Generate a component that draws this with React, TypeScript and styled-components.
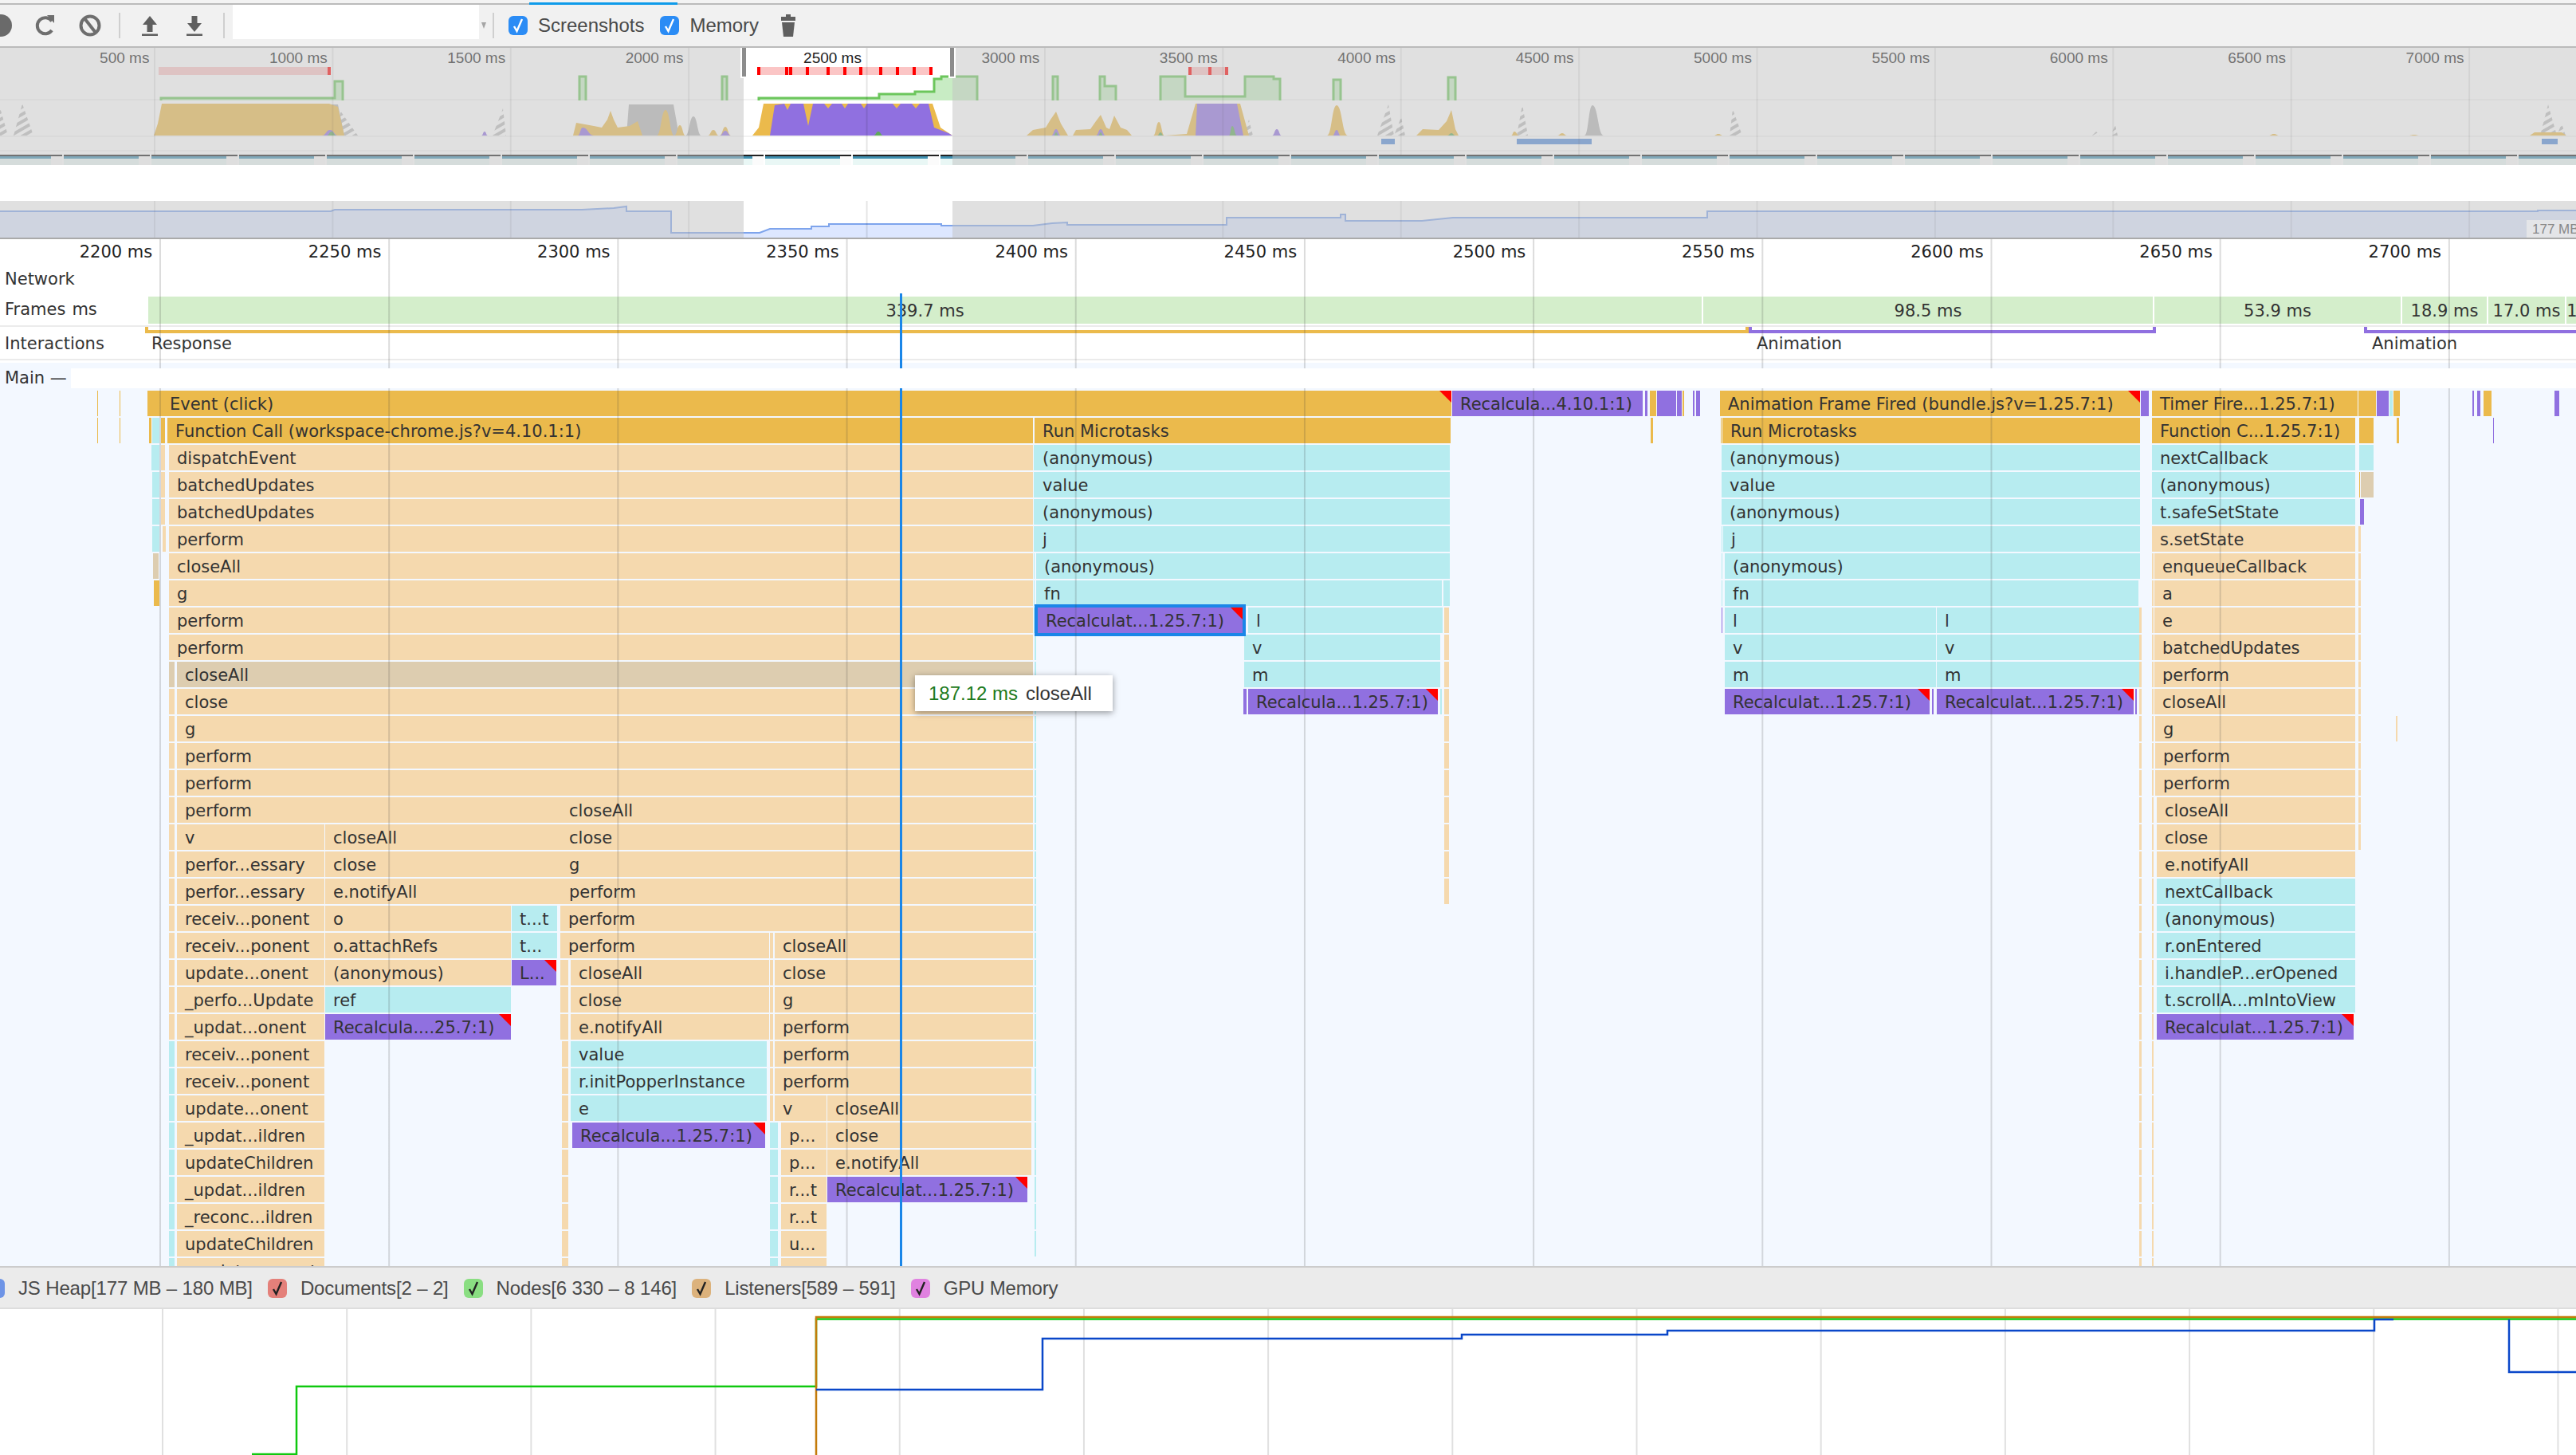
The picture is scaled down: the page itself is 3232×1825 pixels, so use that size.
import React from 'react';
import styled, { createGlobalStyle } from 'styled-components';

type Kind = 'event' | 'js' | 'fn' | 'paint' | 'hl';
type Seg = [number, number, Kind, string?, boolean?];

const barColors: Record<Kind, string> = {
  event: '#ebba4c',
  js: '#f5d9ae',
  fn: '#b7ecf0',
  paint: '#9070e0',
  hl: '#ddcdb0',
};

const UI_FONT = '"Liberation Sans", Arial, sans-serif';
const CHART_FONT = '"DejaVu Sans", Verdana, sans-serif';
const BLUE = '#1a86e8';

const GlobalStyle = createGlobalStyle`
  html, body {
    margin: 0;
    padding: 0;
    background: #fff;
    overflow: hidden;
  }
`;

const Page = styled.div`
  width: 3232px;
  height: 1825px;
  display: flex;
  flex-direction: column;
  overflow: hidden;
  font-family: ${UI_FONT};
  color: #333;
`;

const TabStrip = styled.div`
  position: relative;
  height: 4px;
  flex: none;
  background: #f3f3f3;
  border-bottom: 2px solid #bbb;
`;

const ActiveTab = styled.div`
  position: absolute;
  left: 664px;
  top: 3px;
  width: 186px;
  height: 3px;
  background: #0f9bea;
`;

const Toolbar = styled.div`
  height: 52px;
  flex: none;
  display: flex;
  align-items: center;
  background: #f1f1f1;
  border-bottom: 2px solid #bbb;
`;

const ToolButton = styled.div<{ $first?: boolean }>`
  width: 56px;
  height: 30px;
  flex: none;
  display: flex;
  align-items: center;
  justify-content: center;
  margin-left: ${(p) => (p.$first ? '-27px' : '0')};
`;

const ToolSep = styled.div`
  width: 2px;
  height: 32px;
  flex: none;
  margin: 0 9px 0 8px;
  background: #cfcfcf;
`;

const FilterBox = styled.div`
  width: 309px;
  height: 43px;
  flex: none;
  align-self: flex-start;
  margin-left: 1px;
  background: #fff;
`;

const DropArrow = styled.div`
  width: 0;
  height: 0;
  flex: none;
  margin-left: 3px;
  border-left: 3px solid transparent;
  border-right: 3px solid transparent;
  border-top: 8px solid #a5a5a5;
`;

const CheckRow = styled.div`
  display: flex;
  align-items: center;
  gap: 20px;
  margin-left: 9px;
`;

const CheckGroup = styled.label`
  display: flex;
  align-items: center;
  gap: 13px;
  font-size: 24px;
  color: #4a4a4a;
  white-space: nowrap;
`;

const CheckBox = styled.span<{ $color: string }>`
  width: 24px;
  height: 24px;
  flex: none;
  border-radius: 6px;
  display: flex;
  align-items: center;
  justify-content: center;
  background: ${(p) => p.$color};
`;

const TrashButton = styled.div`
  margin-left: 27px;
  display: flex;
`;

const Overview = styled.div`
  height: 238px;
  flex: none;
  display: flex;
  flex-direction: column;
  background: #fff;
  border-bottom: 2px solid #aaa;
`;

const OverviewTop = styled.div`
  position: relative;
  height: 147px;
  flex: none;
  display: flex;
  flex-direction: column;
  overflow: hidden;
`;

const OverviewGap = styled.div`
  height: 45px;
  flex: none;
`;

const OverviewMemory = styled.div`
  position: relative;
  height: 46px;
  flex: none;
  overflow: hidden;
`;

const OverviewTicks = styled.div`
  position: relative;
  height: 26px;
  flex: none;
  display: flex;
  margin-left: -30px;
`;

const OverviewTick = styled.div`
  flex: 0 0 223.4px;
  box-sizing: border-box;
  padding-right: 6px;
  text-align: right;
  font-size: 19px;
  line-height: 26px;
  color: #222;
  white-space: nowrap;
`;

const ChartSvg = styled.svg`
  position: absolute;
  left: 0;
  top: 0;
  display: block;
`;

const OverviewGrid = styled.div`
  position: absolute;
  inset: 0;
  background-image: linear-gradient(90deg, rgba(0, 0, 0, 0.1) 0 2px, transparent 2px);
  background-size: 223.4px 100%;
  background-position: 193px 0;
`;

const Filmstrip = styled.div`
  position: relative;
  margin-top: auto;
  height: 13px;
  flex: none;
  display: flex;
  gap: 2px;
  margin-left: -30px;
`;

const FilmFrame = styled.div`
  position: relative;
  flex: 0 0 108px;
  background: linear-gradient(180deg, #222 0 2px, #3f8fb0 2px 5px, #e9f7f5 5px);
  &::after {
    content: '';
    position: absolute;
    right: 0;
    top: 2px;
    bottom: 0;
    width: 14px;
    background: #fbfbfb;
  }
`;

const Dim = styled.div<{ $side: 'left' | 'right' }>`
  position: absolute;
  top: 0;
  bottom: 0;
  ${(p) => (p.$side === 'left' ? 'left: 0; width: 933px;' : 'left: 1195px; right: 0;')}
  background: rgba(193, 193, 193, 0.5);
`;

const Handle = styled.div<{ $x: number }>`
  position: absolute;
  top: 0;
  left: ${(p) => p.$x}px;
  width: 5px;
  height: 36px;
  background: #8c8c8c;
  border: 2px solid #fff;
  border-top: 0;
`;

const MemoryBadge = styled.div`
  position: absolute;
  right: 0;
  bottom: 0;
  width: 62px;
  height: 22px;
  box-sizing: border-box;
  padding-left: 7px;
  font-size: 17px;
  line-height: 24px;
  color: #888;
  white-space: nowrap;
  overflow: hidden;
  background: rgba(235, 235, 235, 0.75);
`;

const Timeline = styled.div`
  position: relative;
  height: 1288px;
  flex: none;
  display: flex;
  flex-direction: column;
  overflow: hidden;
  font-family: ${CHART_FONT};
  font-size: 21px;
  color: #333;
`;

const TimeGrid = styled.div`
  position: absolute;
  inset: 0;
  z-index: 1;
  pointer-events: none;
  background-image: linear-gradient(90deg, rgba(60, 60, 60, 0.18) 0 2px, transparent 2px);
  background-size: 287.2px 100%;
  background-position: 200px 0;
`;

const Ruler = styled.div`
  height: 40px;
  flex: none;
  display: flex;
  margin-left: -86px;
`;

const RulerLabel = styled.div`
  flex: 0 0 287.2px;
  box-sizing: border-box;
  padding-right: 10px;
  text-align: right;
  line-height: 32px;
  color: #222;
  white-space: nowrap;
`;

const NetworkTrack = styled.div`
  height: 30px;
  flex: none;
  padding-left: 6px;
  line-height: 20px;
`;

const FramesTrack = styled.div`
  position: relative;
  height: 34px;
  flex: none;
  padding: 2px 0 2px 186px;
  display: flex;
  gap: 2px;
  border-bottom: 2px solid #ebebeb;
`;

const TrackName = styled.div`
  position: absolute;
  left: 6px;
  top: 0;
  line-height: 36px;
  white-space: nowrap;
`;

const FramesUnit = styled.span`
  margin-left: 8px;
`;

const FrameBar = styled.div`
  flex: none;
  background: #d4eecb;
  text-align: center;
  line-height: 37px;
  white-space: nowrap;
  overflow: hidden;
`;

const InteractionsTrack = styled.div`
  position: relative;
  height: 40px;
  flex: none;
  border-bottom: 2px solid #ebebeb;
`;

const InteractionName = styled.div`
  position: absolute;
  left: 6px;
  top: 8px;
  line-height: 26px;
`;

const Bracket = styled.div<{ $color: string }>`
  position: absolute;
  top: 0;
  height: 4px;
  box-sizing: content-box;
  border: 4px solid ${(p) => p.$color};
  border-top: 0;
`;

const InteractionLabel = styled.div`
  position: absolute;
  top: 8px;
  line-height: 26px;
`;

const MainTrack = styled.div`
  position: relative;
  flex: 1;
  margin-top: 3px;
  padding-top: 35px;
  background: #f3f8ff;
  overflow: hidden;
`;

const MainHeader = styled.div`
  position: absolute;
  left: 0;
  right: 0;
  top: 7px;
  height: 25px;
  padding-left: 6px;
  line-height: 24px;
  z-index: 3;
  &::after {
    content: '';
    position: absolute;
    left: 89px;
    right: 0;
    top: 0;
    bottom: 0;
    background: #fff;
  }
`;

const FlameRow = styled.div`
  position: relative;
  height: 32px;
  margin-bottom: 2px;
`;

const FlameBar = styled.div<{ $kind: Kind; $selected?: boolean; $flagged?: boolean }>`
  position: absolute;
  top: 0;
  height: 32px;
  box-sizing: border-box;
  background: ${(p) => barColors[p.$kind]};
  line-height: 34px;
  white-space: nowrap;
  overflow: ${(p) => (p.$selected ? 'visible' : 'hidden')};
  ${(p) => (p.$selected ? `outline: 4px solid ${BLUE}; z-index: 1;` : '')}
  ${(p) =>
    p.$flagged
      ? `&::after {
        content: '';
        position: absolute;
        right: 0;
        top: 0;
        width: 0;
        height: 0;
        border-top: 15px solid #f00;
        border-left: 15px solid transparent;
      }`
      : ''}
`;

const Cursor = styled.div`
  position: absolute;
  left: 1129px;
  top: 68px;
  bottom: 0;
  width: 3px;
  background: ${BLUE};
  z-index: 2;
`;

const Tooltip = styled.div`
  position: absolute;
  left: 1148px;
  top: 547px;
  width: 248px;
  height: 45px;
  box-sizing: border-box;
  padding-left: 17px;
  display: flex;
  align-items: center;
  gap: 10px;
  background: #fff;
  box-shadow: 0 2px 8px rgba(0, 0, 0, 0.4);
  font-family: ${UI_FONT};
  font-size: 24px;
  color: #333;
  z-index: 4;
  white-space: nowrap;
`;

const TooltipTime = styled.span`
  color: #1c7a1c;
`;

const LegendBar = styled.div`
  height: 48px;
  flex: none;
  padding-top: 2px;
  display: flex;
  align-items: center;
  gap: 19px;
  margin-left: -18px;
  background: #ebebeb;
  border-top: 2px solid #ccc;
  border-bottom: 2px solid #ddd;
`;

const LegendItem = styled.label`
  display: flex;
  align-items: center;
  gap: 17px;
  font-size: 24px;
  letter-spacing: -0.15px;
  color: #4a4a4a;
  white-space: nowrap;
`;

const CountersChart = styled.div`
  position: relative;
  flex: 1;
  background-color: #fff;
  background-image: linear-gradient(90deg, #e0e0e0 0 2px, transparent 2px);
  background-size: 231.2px 100%;
  background-position: 203px 0;
`;

// overview ---------------------------------------------------------------

const peak = (x0: number, xp: number, x1: number, top: number) => {
  const a = (x0 + xp) / 2;
  const b = (xp + x1) / 2;
  return `M${x0} 170C${a} 170 ${a} ${top} ${xp} ${top}C${b} ${top} ${b} 170 ${x1} 170Z`;
};

const grayPaths = [
  'M786 170L789 131L845 131L852 170Z',
  peak(860, 870, 880, 146),
  peak(1988, 1998, 2012, 132),
  'M408 170L411 131L424 131L432 170Z',
];

const hatchPaths = [
  'M0 170L0 135L10 170Z',
  'M17 170L28 130L42 170Z',
  'M427 170L427 139L449 170Z',
  'M618 170L631 136L635 170Z',
  'M1728 170L1742 131L1749 170Z',
  'M1749 170L1758 147L1763 170Z',
  'M1903 170L1910 131L1917 170Z',
  'M2170 170L2174 137L2186 170Z',
  'M2625 170L2630 165L2635 170Z',
  'M2648 170L2654 157L2657 170Z',
  'M3187 170L3197 131L3208 170Z',
  'M3208 170L3214 155L3219 170Z',
  'M1561 170L1567 150L1572 170Z',
];

const scriptPaths = [
  'M193 170L198 155L203 130L413 130L424 134L432 170Z',
  'M719 170L723 154L745 158L755 160L762 150L766 139L770 150L775 160L790 158L800 152L806 170Z',
  peak(824, 835, 846, 138),
  peak(846, 853, 860, 157),
  peak(888, 895, 902, 163),
  peak(903, 910, 917, 159),
  'M944 170L952 160L958 130L1170 130L1180 160L1195 170Z',
  'M1288 170L1296 163L1312 160L1318 150L1325 140L1331 155L1340 170Z',
  'M1346 170L1350 163L1368 162L1375 152L1381 144L1388 160L1392 162L1398 145L1406 160L1414 163L1420 170Z',
  peak(1447, 1454, 1461, 153),
  'M1461 170L1489 168L1500 130L1556 130L1567 170Z',
  peak(1665, 1677, 1691, 132),
  'M1777 170L1785 162L1805 163L1815 152L1821 138L1826 162L1830 170Z',
  peak(1896, 1900, 1906, 165),
  peak(1954, 1960, 1966, 167),
  peak(2150, 2156, 2162, 168),
  peak(2846, 2853, 2860, 168),
  peak(3022, 3029, 3036, 169),
  'M3174 170L3180 166L3214 166L3220 170Z',
];

const paintPaths = [
  'M966 170L972 132L984 130L988 138L992 130L1008 130L1014 158L1020 130L1034 130L1039 136L1044 130L1056 130L1060 136L1064 130L1080 130L1084 136L1088 130L1120 130L1125 136L1130 130L1144 130L1149 136L1154 130L1165 130L1172 160L1190 167L1195 170Z',
  'M1500 170L1502 130L1552 130L1560 170Z',
  peak(725, 731, 745, 160),
  peak(404, 414, 424, 163),
  peak(604, 608, 612, 165),
  peak(1319, 1325, 1331, 162),
  peak(1375, 1381, 1387, 162),
  peak(1596, 1602, 1608, 162),
  peak(1672, 1677, 1682, 163),
  peak(903, 910, 917, 164),
];

const greenPaths = [
  peak(1096, 1102, 1108, 165),
  peak(410, 416, 422, 165),
  peak(1452, 1456, 1460, 166),
  peak(1542, 1546, 1552, 158),
  peak(1322, 1325, 1328, 166),
  peak(1378, 1381, 1384, 166),
  peak(1816, 1821, 1826, 167),
];

const fpsPath =
  'M202 126V123H420V102H430V126M727 126V96H735V126M906 126V96H912V126M952 126V123H1103V118H1148V115H1172V99H1181V96H1226V126M1321 126V96H1327V126M1380 126V96H1386V108H1400V126M1456 126V96H1487V121H1562V96H1598V99H1606V126M1673 126V100H1682V126M1817 126V97H1826V126';

const alarmBars: [number, number, number[]][] = [
  [199, 415, [411]],
  [950, 1170, [950, 985, 990, 1011, 1037, 1058, 1078, 1103, 1124, 1145, 1166]],
  [1491, 1541, [1491, 1516, 1537]],
];

const netBars = [
  [1733, 1750],
  [1903, 1997],
  [3189, 3209],
];

const memoryLine =
  'M0 265H415L420 263H730L770 261L786 259V265H842V292H953L966 287H1018V284H1040V281H1181V283H1296L1320 280L1339 279V282H1539V273H1682V269H1688V277H1784L1823 273H2142V265H3184V264H3232';

function OverviewChart() {
  return (
    <ChartSvg width={3232} height={147} viewBox="0 60 3232 147">
      <defs>
        <pattern id="hatch" width="8" height="8" patternUnits="userSpaceOnUse" patternTransform="rotate(-30)">
          <rect width="8" height="4" fill="#bcbcbc" />
        </pattern>
      </defs>
      <rect x="0" y="124" width="3232" height="2" fill="rgba(0,0,0,.05)" />
      <rect x="0" y="170" width="3232" height="2" fill="rgba(0,0,0,.05)" />
      <rect x="0" y="188" width="3232" height="2" fill="rgba(0,0,0,.05)" />
      {alarmBars.map(([x0, x1, marks]) => (
        <g key={x0}>
          <rect x={x0} y={84} width={x1 - x0} height={10} fill="#fbc5c5" />
          {marks.map((m) => (
            <rect key={m} x={m} y={84} width={4} height={10} fill="#f00" />
          ))}
        </g>
      ))}
      <path d={fpsPath} fill="#c8ecc4" stroke="#6cc65c" strokeWidth="3" />
      {hatchPaths.map((d) => (
        <path key={d} d={d} fill="url(#hatch)" />
      ))}
      {grayPaths.map((d) => (
        <path key={d} d={d} fill="#b4b4b4" />
      ))}
      {scriptPaths.map((d) => (
        <path key={d} d={d} fill="#ebba4c" />
      ))}
      {paintPaths.map((d) => (
        <path key={d} d={d} fill="#9070e0" />
      ))}
      {greenPaths.map((d) => (
        <path key={d} d={d} fill="#5fa85a" />
      ))}
      {netBars.map(([x0, x1]) => (
        <rect key={x0} x={x0} y={174} width={x1 - x0} height={7} fill="#538bd9" />
      ))}
    </ChartSvg>
  );
}

// flame chart ------------------------------------------------------------

const rows: Seg[][] = [
  [
    [122, 123, 'event'], [150, 151, 'event'], [185, 203, 'event'],
    [203, 1821, 'event', 'Event (click)', true],
    [1822, 2061, 'paint', 'Recalcula...4.10.1:1)'],
    [2064, 2067, 'paint'], [2070, 2078, 'event'], [2079, 2103, 'paint'], [2104, 2110, 'paint'], [2111, 2113, 'event'],
    [2124, 2126, 'paint'], [2128, 2133, 'paint'],
    [2158, 2685, 'event', 'Animation Frame Fired (bundle.js?v=1.25.7:1)', true],
    [2686, 2696, 'paint'],
    [2700, 2958, 'event', 'Timer Fire...1.25.7:1)'],
    [2959, 2981, 'event'], [2982, 2997, 'paint'], [2998, 3002, 'fn'], [3003, 3011, 'event'],
    [3102, 3104, 'paint'], [3108, 3112, 'paint'], [3116, 3126, 'event'], [3205, 3211, 'paint'],
  ],
  [
    [122, 123, 'event'], [150, 151, 'event'], [187, 190, 'event'], [191, 200, 'fn'], [202, 207, 'event'],
    [210, 1296, 'event', 'Function Call (workspace-chrome.js?v=4.10.1:1)'],
    [1298, 1820, 'event', 'Run Microtasks'], [2071, 2074, 'event'],
    [2159, 2160, 'event'], [2161, 2685, 'event', 'Run Microtasks'],
    [2700, 2955, 'event', 'Function C...1.25.7:1)'], [2960, 2978, 'event'], [3007, 3010, 'event'], [3128, 3129, 'paint'],
  ],
  [
    [190, 200, 'fn'], [202, 207, 'js'], [212, 1296, 'js', 'dispatchEvent'],
    [1298, 1819, 'fn', '(anonymous)'], [2160, 2685, 'fn', '(anonymous)'],
    [2700, 2955, 'fn', 'nextCallback'], [2960, 2978, 'fn'],
  ],
  [
    [191, 200, 'fn'], [202, 207, 'js'], [212, 1296, 'js', 'batchedUpdates'],
    [1298, 1819, 'fn', 'value'], [2160, 2685, 'fn', 'value'],
    [2700, 2955, 'fn', '(anonymous)'], [2960, 2961, 'event'], [2962, 2978, 'hl'],
  ],
  [
    [191, 200, 'fn'], [202, 207, 'js'], [212, 1296, 'js', 'batchedUpdates'],
    [1298, 1819, 'fn', '(anonymous)'], [2160, 2685, 'fn', '(anonymous)'],
    [2700, 2955, 'fn', 't.safeSetState'], [2961, 2964, 'paint'], [2964, 2966, 'paint'],
  ],
  [
    [191, 200, 'fn'], [204, 208, 'js'], [212, 1296, 'js', 'perform'],
    [1298, 1819, 'fn', 'j'], [2160, 2161, 'fn'], [2162, 2685, 'fn', 'j'],
    [2700, 2955, 'js', 's.setState'],
  ],
  [
    [192, 199, 'hl'], [212, 1296, 'js', 'closeAll'],
    [1300, 1819, 'fn', '(anonymous)'], [2160, 2161, 'fn'], [2164, 2685, 'fn', '(anonymous)'],
    [2703, 2955, 'js', 'enqueueCallback'],
  ],
  [
    [193, 200, 'event'], [212, 1296, 'js', 'g'],
    [1300, 1809, 'fn', 'fn'], [1811, 1819, 'fn'], [2160, 2161, 'fn'], [2164, 2683, 'fn', 'fn'],
    [2703, 2955, 'js', 'a'],
  ],
  [
    [212, 1296, 'js', 'perform'],
    [1302, 1559, 'paint', 'Recalculat...1.25.7:1)', true],
    [1566, 1810, 'fn', 'l'], [2160, 2161, 'paint'], [2164, 2429, 'fn', 'l'], [2430, 2684, 'fn', 'l'],
    [2703, 2955, 'js', 'e'],
  ],
  [
    [212, 1296, 'js', 'perform'], [1561, 1807, 'fn', 'v'], [2164, 2429, 'fn', 'v'], [2430, 2684, 'fn', 'v'],
    [2703, 2955, 'js', 'batchedUpdates'],
  ],
  [
    [212, 219, 'hl'], [222, 1296, 'hl', 'closeAll'], [1561, 1807, 'fn', 'm'],
    [2164, 2429, 'fn', 'm'], [2430, 2684, 'fn', 'm'], [2703, 2955, 'js', 'perform'],
  ],
  [
    [212, 219, 'js'], [222, 1296, 'js', 'close'],
    [1560, 1564, 'paint'], [1566, 1804, 'paint', 'Recalcula...1.25.7:1)', true], [1807, 1809, 'fn'],
    [2164, 2421, 'paint', 'Recalculat...1.25.7:1)', true], [2424, 2426, 'paint'],
    [2430, 2677, 'paint', 'Recalculat...1.25.7:1)', true], [2679, 2681, 'paint'],
    [2703, 2955, 'js', 'closeAll'],
  ],
  [[212, 219, 'js'], [222, 1296, 'js', 'g'], [2704, 2955, 'js', 'g']],
  [[212, 219, 'js'], [222, 1296, 'js', 'perform'], [2704, 2955, 'js', 'perform']],
  [[212, 219, 'js'], [222, 1296, 'js', 'perform'], [2704, 2955, 'js', 'perform']],
  [
    [212, 219, 'js'], [222, 704, 'js', 'perform'], [704, 1296, 'js', 'closeAll'],
    [2706, 2955, 'js', 'closeAll'],
  ],
  [
    [212, 219, 'js'], [222, 407, 'js', 'v'], [408, 704, 'js', 'closeAll'], [704, 1296, 'js', 'close'],
    [2706, 2955, 'js', 'close'],
  ],
  [
    [212, 219, 'js'], [222, 407, 'js', 'perfor...essary'], [408, 704, 'js', 'close'], [704, 1296, 'js', 'g'],
    [2706, 2955, 'js', 'e.notifyAll'],
  ],
  [
    [212, 219, 'js'], [222, 407, 'js', 'perfor...essary'], [408, 704, 'js', 'e.notifyAll'], [704, 1296, 'js', 'perform'],
    [2706, 2955, 'fn', 'nextCallback'],
  ],
  [
    [212, 219, 'js'], [222, 407, 'js', 'receiv...ponent'], [408, 641, 'js', 'o'], [642, 699, 'fn', 't...t'],
    [703, 1296, 'js', 'perform'], [2706, 2955, 'fn', '(anonymous)'],
  ],
  [
    [212, 219, 'js'], [222, 407, 'js', 'receiv...ponent'], [408, 641, 'js', 'o.attachRefs'], [642, 699, 'fn', 't...'],
    [703, 965, 'js', 'perform'], [966, 970, 'js'], [972, 1296, 'js', 'closeAll'], [2706, 2955, 'fn', 'r.onEntered'],
  ],
  [
    [212, 219, 'js'], [222, 407, 'js', 'update...onent'], [408, 641, 'js', '(anonymous)'],
    [642, 698, 'paint', 'L...', true], [703, 713, 'js'], [716, 965, 'js', 'closeAll'], [966, 970, 'js'],
    [972, 1296, 'js', 'close'], [2706, 2955, 'fn', 'i.handleP...erOpened'],
  ],
  [
    [212, 219, 'js'], [222, 407, 'js', '_perfo...Update'], [408, 641, 'fn', 'ref'], [703, 713, 'js'],
    [716, 965, 'js', 'close'], [966, 970, 'js'], [972, 1296, 'js', 'g'], [2706, 2955, 'fn', 't.scrollA...mIntoView'],
  ],
  [
    [212, 219, 'js'], [222, 407, 'js', '_updat...onent'], [408, 641, 'paint', 'Recalcula....25.7:1)', true],
    [703, 713, 'js'], [716, 965, 'js', 'e.notifyAll'], [966, 970, 'js'], [972, 1296, 'js', 'perform'],
    [2706, 2953, 'paint', 'Recalculat...1.25.7:1)', true],
  ],
  [
    [212, 219, 'fn'], [222, 407, 'js', 'receiv...ponent'], [705, 713, 'js'], [716, 962, 'fn', 'value'],
    [966, 970, 'js'], [972, 1296, 'js', 'perform'],
  ],
  [
    [212, 219, 'fn'], [222, 407, 'js', 'receiv...ponent'], [705, 713, 'js'], [716, 962, 'fn', 'r.initPopperInstance'],
    [966, 970, 'js'], [972, 1294, 'js', 'perform'],
  ],
  [
    [212, 219, 'fn'], [222, 407, 'js', 'update...onent'], [705, 713, 'js'], [716, 962, 'fn', 'e'],
    [966, 970, 'js'], [972, 1037, 'js', 'v'], [1038, 1294, 'js', 'closeAll'],
  ],
  [
    [212, 219, 'fn'], [222, 407, 'js', '_updat...ildren'], [705, 713, 'js'],
    [718, 960, 'paint', 'Recalcula...1.25.7:1)', true], [966, 976, 'fn'],
    [980, 1037, 'js', 'p...'], [1038, 1294, 'js', 'close'],
  ],
  [
    [212, 219, 'fn'], [222, 407, 'js', 'updateChildren'], [705, 713, 'js'], [966, 976, 'fn'],
    [980, 1037, 'js', 'p...'], [1038, 1294, 'js', 'e.notifyAll'],
  ],
  [
    [212, 219, 'fn'], [222, 407, 'js', '_updat...ildren'], [705, 713, 'js'], [966, 976, 'fn'],
    [980, 1037, 'js', 'r...t'], [1038, 1289, 'paint', 'Recalculat...1.25.7:1)', true],
  ],
  [
    [212, 219, 'fn'], [222, 407, 'js', '_reconc...ildren'], [705, 713, 'js'], [966, 976, 'fn'],
    [980, 1037, 'js', 'r...t'],
  ],
  [
    [212, 219, 'fn'], [222, 407, 'js', 'updateChildren'], [705, 713, 'js'], [966, 976, 'fn'],
    [980, 1037, 'js', 'u...'],
  ],
  [
    [212, 219, 'fn'], [222, 407, 'js', '_update...onent'], [705, 713, 'js'], [966, 976, 'fn'],
    [980, 1037, 'js', '...'],
  ],
];

// thin slivers that run down several rows of the flame chart
const slivers: [number, number, Seg][] = [
  [2, 8, [1297, 1298, 'fn']],
  [9, 31, [1298, 1300, 'fn']],
  [8, 18, [1812, 1818, 'js']],
  [8, 32, [2684, 2687, 'js']],
  [6, 32, [2700, 2702, 'js']],
  [5, 16, [2959, 2962, 'js']],
  [12, 12, [3006, 3008, 'js']],
];

const timelineRows = rows.map((segs, i) => [
  ...segs,
  ...slivers.filter(([from, to]) => i >= from && i <= to).map(([, , seg]) => seg),
]);

const overviewTicks = [500, 1000, 1500, 2000, 2500, 3000, 3500, 4000, 4500, 5000, 5500, 6000, 6500, 7000];
const rulerTicks = [2200, 2250, 2300, 2350, 2400, 2450, 2500, 2550, 2600, 2650, 2700];
const frames: [number, string][] = [
  [1949, '339.7 ms'],
  [564, '98.5 ms'],
  [309, '53.9 ms'],
  [106, '18.9 ms'],
  [96, '17.0 ms'],
  [14, '1'],
];
const interactions: [number, number, number, string, string][] = [
  [182, 2004, 190, '#ebba4c', 'Response'],
  [2194, 503, 2204, '#9070e0', 'Animation'],
  [2966, 400, 2976, '#9070e0', 'Animation'],
];
const legend: [string, string][] = [
  ['#6e94e6', 'JS Heap[177 MB – 180 MB]'],
  ['#e4807a', 'Documents[2 – 2]'],
  ['#8ade82', 'Nodes[6 330 – 8 146]'],
  ['#dcb27c', 'Listeners[589 – 591]'],
  ['#e082e0', 'GPU Memory'],
];

function Check({ color }: { color: string }) {
  return (
    <svg width="16" height="20" viewBox="0 0 16 20">
      <path d="M3 11L6.5 17L13 2" fill="none" stroke={color} strokeWidth="2.4" />
    </svg>
  );
}

export default function App() {
  return (
    <Page>
      <GlobalStyle />
      <TabStrip>
        <ActiveTab />
      </TabStrip>
      <Toolbar>
        <ToolButton $first>
          <svg width="28" height="28" viewBox="0 0 28 28"><circle cx="14" cy="14" r="14" fill="#6a6a6a" /></svg>
        </ToolButton>
        <ToolButton>
          <svg width="26" height="28" viewBox="0 0 26 28">
            <path d="M21 8.5A10 10 0 1 0 21 20" fill="none" stroke="#6e6e6e" strokeWidth="4" />
            <path d="M15 1H24V11Z" fill="#6e6e6e" />
          </svg>
        </ToolButton>
        <ToolButton>
          <svg width="28" height="28" viewBox="0 0 28 28">
            <circle cx="14" cy="14" r="11.5" fill="none" stroke="#6e6e6e" strokeWidth="4" />
            <path d="M7 5L21 23" stroke="#6e6e6e" strokeWidth="4" />
          </svg>
        </ToolButton>
        <ToolSep />
        <ToolButton>
          <svg width="22" height="26" viewBox="0 0 22 26">
            <path d="M11 1L20 12H14.5V21H7.5V12H2Z" fill="#5f5f5f" />
            <rect x="1" y="23.5" width="20" height="2.5" fill="#5f5f5f" />
          </svg>
        </ToolButton>
        <ToolButton>
          <svg width="22" height="26" viewBox="0 0 22 26">
            <path d="M11 21L20 10H14.5V1H7.5V10H2Z" fill="#5f5f5f" />
            <rect x="1" y="23.5" width="20" height="2.5" fill="#5f5f5f" />
          </svg>
        </ToolButton>
        <ToolSep />
        <FilterBox />
        <DropArrow />
        <ToolSep />
        <CheckRow>
          <CheckGroup>
            <CheckBox $color="#2b8cf5"><Check color="#fff" /></CheckBox>
            Screenshots
          </CheckGroup>
          <CheckGroup>
            <CheckBox $color="#2b8cf5"><Check color="#fff" /></CheckBox>
            Memory
          </CheckGroup>
        </CheckRow>
        <TrashButton>
          <svg width="20" height="28" viewBox="0 0 20 28">
            <path d="M7 0H13V3H19V8H1V3H7Z" fill="#5f5f5f" />
            <path d="M2 10H18L16 28H4Z" fill="#5f5f5f" />
          </svg>
        </TrashButton>
      </Toolbar>
      <Overview>
        <OverviewTop>
          <OverviewChart />
          <OverviewGrid />
          <OverviewTicks>
            {overviewTicks.map((t) => (
              <OverviewTick key={t}>{t} ms</OverviewTick>
            ))}
          </OverviewTicks>
          <Filmstrip>
            {Array.from({ length: 31 }, (_, i) => (
              <FilmFrame key={i} />
            ))}
          </Filmstrip>
          <Dim $side="left" />
          <Dim $side="right" />
          <Handle $x={929} />
          <Handle $x={1190} />
        </OverviewTop>
        <OverviewGap />
        <OverviewMemory>
          <ChartSvg width={3232} height={46} viewBox="0 252 3232 46">
            <path d={`${memoryLine}V298H0Z`} fill="#dde7ff" />
            <path d={memoryLine} fill="none" stroke="#7ea4ec" strokeWidth="2" />
          </ChartSvg>
          <OverviewGrid />
          <Dim $side="left" />
          <Dim $side="right" />
          <MemoryBadge>177 MB</MemoryBadge>
        </OverviewMemory>
      </Overview>
      <Timeline>
        <Ruler>
          {rulerTicks.map((t) => (
            <RulerLabel key={t}>{t} ms</RulerLabel>
          ))}
        </Ruler>
        <NetworkTrack>Network</NetworkTrack>
        <FramesTrack>
          <TrackName>
            Frames
            <FramesUnit>ms</FramesUnit>
          </TrackName>
          {frames.map(([w, label]) => (
            <FrameBar key={label} style={{ width: w }}>{label}</FrameBar>
          ))}
        </FramesTrack>
        <InteractionsTrack>
          <InteractionName>Interactions</InteractionName>
          {interactions.map(([x, w, labelX, color, label]) => (
            <React.Fragment key={x}>
              <Bracket $color={color} style={{ left: x, width: w }} />
              <InteractionLabel style={{ left: labelX }}>{label}</InteractionLabel>
            </React.Fragment>
          ))}
        </InteractionsTrack>
        <MainTrack>
          <MainHeader>Main —</MainHeader>
          {timelineRows.map((segs, i) => (
            <FlameRow key={i}>
              {segs.map(([x0, x1, kind, label, flagged]) => (
                <FlameBar
                  key={x0}
                  $kind={kind}
                  $flagged={flagged}
                  $selected={x0 === 1302}
                  style={{ left: x0, width: x1 - x0, paddingLeft: label ? 10 : 0 }}
                >
                  {label}
                </FlameBar>
              ))}
            </FlameRow>
          ))}
        </MainTrack>
        <TimeGrid />
        <Cursor />
        <Tooltip>
          <TooltipTime>187.12 ms</TooltipTime>
          closeAll
        </Tooltip>
      </Timeline>
      <LegendBar>
        {legend.map(([color, label]) => (
          <LegendItem key={label}>
            <CheckBox $color={color}><Check color="#222" /></CheckBox>
            {label}
          </LegendItem>
        ))}
      </LegendBar>
      <CountersChart>
        <ChartSvg width={3232} height={183} viewBox="0 1642 3232 183">
          <path d="M316 1824H372V1739H1024V1654.5H3232" fill="none" stroke="#0fc80f" strokeWidth="2.5" />
          <path d="M1024 1825V1652H3232" fill="none" stroke="#c47b0a" strokeWidth="2.5" />
          <path d="M1024 1743H1308V1679H1834V1674H2092V1669H2979V1655H3003M3148 1655V1721H3232" fill="none" stroke="#0a47c9" strokeWidth="2.5" />
        </ChartSvg>
      </CountersChart>
    </Page>
  );
}
